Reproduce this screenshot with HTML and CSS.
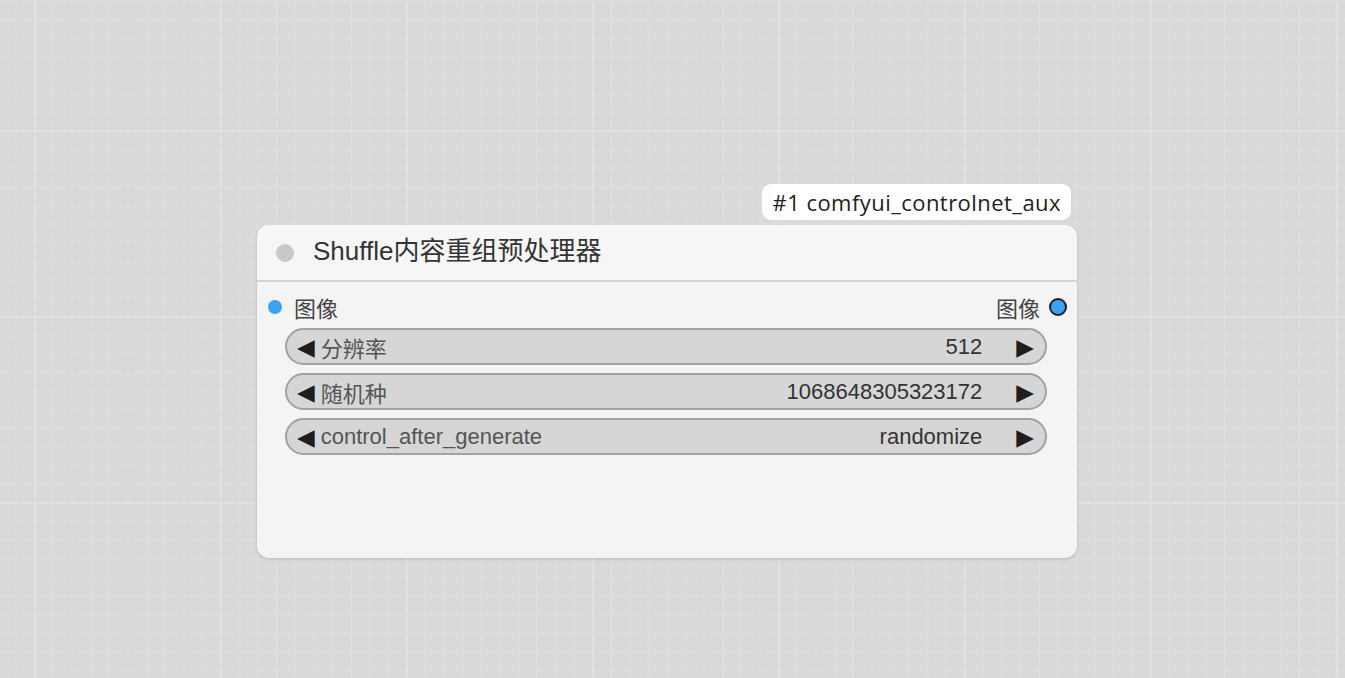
FILE: index.html
```html
<!DOCTYPE html>
<html lang="zh">
<head>
<meta charset="utf-8">
<title>ComfyUI node</title>
<link rel="stylesheet" href="styles.css">
</head>
<body>
<div class="canvas">
  <div class="node">
    <div class="badge">#1 comfyui_controlnet_aux</div>
    <div class="title">
      <span class="title-dot"></span>
      <span class="title-text">Shuffle内容重组预处理器</span>
    </div>
    <div class="body">
      <div class="io-row">
        <div class="io in"><span class="slot slot-in"></span><span>图像</span></div>
        <div class="io out"><span>图像</span><span class="slot slot-out"></span></div>
      </div>
      <div class="widgets">
        <div class="widget"><span class="arrow">◀</span><span class="label">分辨率</span><span class="value">512</span><span class="arrow">▶</span></div>
        <div class="widget"><span class="arrow">◀</span><span class="label">随机种</span><span class="value">1068648305323172</span><span class="arrow">▶</span></div>
        <div class="widget"><span class="arrow">◀</span><span class="label">control_after_generate</span><span class="value">randomize</span><span class="arrow">▶</span></div>
      </div>
    </div>
  </div>
</div>
</body>
</html>
```
FILE: styles.css
```css
html, body {
  margin: 0;
  padding: 0;
  width: 1345px;
  height: 678px;
  overflow: hidden;
}
body {
  font-family: "Liberation Sans", Arial, "Noto Sans CJK SC", sans-serif;
}
.canvas {
  position: relative;
  width: 1345px;
  height: 678px;
  background-color: #d9d9d9;
  background-image:
    linear-gradient(to right, #e1e1e1 0, #e1e1e1 2px, transparent 2px),
    linear-gradient(to bottom, #e0e0e0 0, #e0e0e0 2px, transparent 2px),
    linear-gradient(to right, #dddddd 0, #dddddd 2px, transparent 2px),
    linear-gradient(to bottom, #dddddd 0, #dddddd 2px, transparent 2px);
  background-size: 186px 186px, 186px 186px, 18.6px 18.6px, 18.6px 18.6px;
  background-position: 34px 0, 0 130px, 15.4px 0, 0 0;
}
.node {
  position: absolute;
  left: 257px;
  top: 225px;
  width: 820px;
  height: 333px;
  background: #f4f4f4;
  border-radius: 12px;
  box-shadow: 0 1px 3px rgba(0,0,0,0.18);
  display: flex;
  flex-direction: column;
}
.badge {
  position: absolute;
  right: 6px;
  top: -41px;
  height: 36px;
  padding: 0 10px 0 11px;
  background: #ffffff;
  border-radius: 9px;
  display: flex;
  align-items: center;
  font-family: "Open Sans", "Noto Sans", sans-serif;
  font-size: 22px;
  letter-spacing: 0.45px;
  color: #222;
  white-space: nowrap;
}
.title {
  height: 55px;
  display: flex;
  align-items: center;
  padding-left: 19px;
  background: #f6f6f6;
  border-radius: 12px 12px 0 0;
  border-bottom: 2px solid #d4d4d4;
}
.title-dot {
  width: 18px;
  height: 18px;
  border-radius: 50%;
  background: #c9c9c9;
  margin-right: 19px;
}
.title-text {
  font-size: 26px;
  line-height: 30px;
  margin-top: -4px;
  color: #333;
  font-family: "Liberation Sans", Arial, "Noto Sans CJK SC", sans-serif;
}
.body {
  display: flex;
  flex-direction: column;
  padding: 11px 0 0 0;
}
.io-row {
  display: flex;
  justify-content: space-between;
  align-items: center;
  height: 27px;
  padding: 0 10px 0 11px;
  font-size: 22px;
  color: #444;
}
.io {
  display: flex;
  align-items: center;
}
.slot {
  display: inline-block;
  border-radius: 50%;
  background: #3ba1f3;
}
.slot-in {
  width: 14px;
  height: 14px;
  margin-right: 12px;
}
.slot-out {
  width: 14px;
  height: 14px;
  border: 2px solid #1e1e1e;
  margin-left: 9px;
}
.widgets {
  display: flex;
  flex-direction: column;
  gap: 8px;
  padding: 8px 30px 0 28px;
}
.widget {
  height: 33px;
  border: 2px solid #a2a2a2;
  border-radius: 19px;
  background: #d6d6d6;
  display: flex;
  align-items: center;
  padding: 0 11px 0 10px;
  font-size: 22px;
}
.arrow {
  color: #1e1e1e;
  font-size: 23px;
  font-family: "DejaVu Sans", sans-serif;
}
.label {
  color: #555;
  margin-left: 6px;
  flex: 1;
}
.value {
  color: #333;
  margin-right: 34px;
}
```
